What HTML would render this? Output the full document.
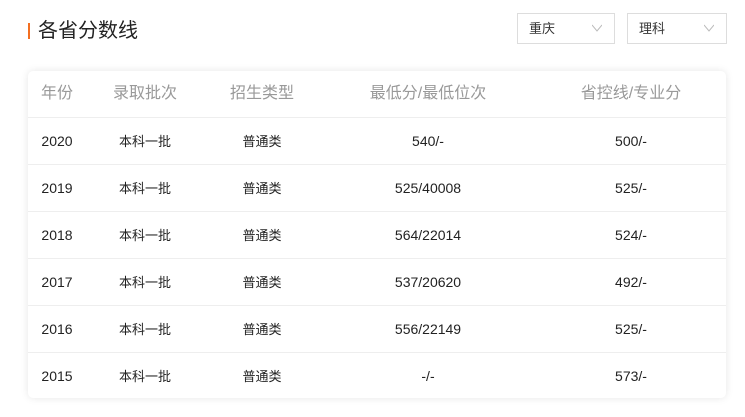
<!DOCTYPE html>
<html><head><meta charset="utf-8"><style>
body{margin:0;width:745px;height:417px;background:#fff;font-family:"Liberation Sans","Noto Sans CJK SC",sans-serif;position:relative;overflow:hidden}
.title{position:absolute;left:28px;top:18px;font-size:20px;color:#222;line-height:26px;padding-left:10px}
.title:before{content:"";position:absolute;left:0;top:5px;width:2px;height:16px;background:#f36f21}
.sel{position:absolute;top:13px;width:98px;height:31px;border:1px solid #ddd;box-sizing:border-box;font-size:13px;color:#333;line-height:30px;padding-left:11px}
.sel svg{position:absolute;right:12px;top:10px}
.card{position:absolute;left:28px;top:71px;width:698px;height:327px;background:#fff;border-radius:5px;box-shadow:0 0 8px rgba(0,0,0,.1)}
.row{position:absolute;left:0;width:698px;height:47px;border-bottom:1px solid #eee;box-sizing:border-box;font-size:13px;color:#222}
.row span{position:absolute;top:0;line-height:47px;transform:translateX(-50%);white-space:nowrap}
.row span.n{font-size:14px}
.h{font-size:16px;color:#999}
.h span{line-height:46px}
</style></head><body>
<div class="title">各省分数线</div>
<div class="sel" style="left:517px">重庆<svg width="10" height="8"><path d="M0 1L5 7L10 1" fill="none" stroke="#bbb"/></svg></div>
<div class="sel" style="left:627px;width:100px">理科<svg width="10" height="8"><path d="M0 1L5 7L10 1" fill="none" stroke="#bbb"/></svg></div>
<div class="card">
<div class="row h" style="top:0"><span style="left:29px">年份</span><span style="left:117px">录取批次</span><span style="left:234px">招生类型</span><span style="left:400px">最低分/最低位次</span><span style="left:603px">省控线/专业分</span></div>
<div class="row" style="top:47px"><span class="n" style="left:29px">2020</span><span style="left:117px">本科一批</span><span style="left:234px">普通类</span><span class="n" style="left:400px">540/-</span><span class="n" style="left:603px">500/-</span></div>
<div class="row" style="top:94px"><span class="n" style="left:29px">2019</span><span style="left:117px">本科一批</span><span style="left:234px">普通类</span><span class="n" style="left:400px">525/40008</span><span class="n" style="left:603px">525/-</span></div>
<div class="row" style="top:141px"><span class="n" style="left:29px">2018</span><span style="left:117px">本科一批</span><span style="left:234px">普通类</span><span class="n" style="left:400px">564/22014</span><span class="n" style="left:603px">524/-</span></div>
<div class="row" style="top:188px"><span class="n" style="left:29px">2017</span><span style="left:117px">本科一批</span><span style="left:234px">普通类</span><span class="n" style="left:400px">537/20620</span><span class="n" style="left:603px">492/-</span></div>
<div class="row" style="top:235px"><span class="n" style="left:29px">2016</span><span style="left:117px">本科一批</span><span style="left:234px">普通类</span><span class="n" style="left:400px">556/22149</span><span class="n" style="left:603px">525/-</span></div>
<div class="row" style="top:282px;border:none"><span class="n" style="left:29px">2015</span><span style="left:117px">本科一批</span><span style="left:234px">普通类</span><span class="n" style="left:400px">-/-</span><span class="n" style="left:603px">573/-</span></div>
</div>
</body></html>
